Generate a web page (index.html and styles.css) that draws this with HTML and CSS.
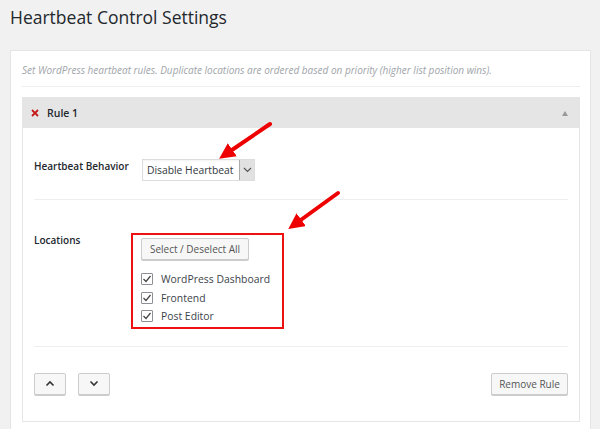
FILE: index.html
```html
<!DOCTYPE html>
<html>
<head>
<meta charset="utf-8">
<link rel="stylesheet" href="styles.css">
</head>
<body>
<div class="wrap">
  <h1 class="title">Heartbeat Control Settings</h1>
  <div class="panel">
    <p class="desc">Set WordPress heartbeat rules. Duplicate locations are ordered based on priority (higher list position wins).</p>
    <div class="rule">
      <div class="rule-head">
        <span class="rule-x"><svg width="8" height="8" viewBox="0 0 8 8"><path d="M1 1 L7 7 M7 1 L1 7" stroke="#c41a1a" stroke-width="1.8"/></svg></span>
        <span class="rule-name">Rule 1</span>
        <span class="rule-toggle"></span>
      </div>
      <div class="rule-body">
        <div class="row row-behavior">
          <div class="label">Heartbeat Behavior</div>
          <div class="field">
            <div class="select">
              <span class="select-text">Disable Heartbeat</span>
              <span class="select-btn">
                <svg width="9" height="6" viewBox="0 0 9 6"><path d="M1 1 L4.5 4.5 L8 1" fill="none" stroke="#555" stroke-width="1.2"/></svg>
              </span>
            </div>
          </div>
        </div>
        <div class="row row-locations">
          <div class="label">Locations</div>
          <div class="field">
            <div class="highlight">
              <button class="btn btn-select">Select / Deselect All</button>
              <ul class="checks">
                <li><span class="cb"><svg width="10" height="10" viewBox="0 0 10 10"><path d="M1.5 5 L4 7.5 L8.5 2" fill="none" stroke="#444" stroke-width="1.2"/></svg></span>WordPress Dashboard</li>
                <li><span class="cb"><svg width="10" height="10" viewBox="0 0 10 10"><path d="M1.5 5 L4 7.5 L8.5 2" fill="none" stroke="#444" stroke-width="1.2"/></svg></span>Frontend</li>
                <li><span class="cb"><svg width="10" height="10" viewBox="0 0 10 10"><path d="M1.5 5 L4 7.5 L8.5 2" fill="none" stroke="#444" stroke-width="1.2"/></svg></span>Post Editor</li>
              </ul>
            </div>
          </div>
        </div>
        <div class="actions">
          <button class="btn btn-icon"><svg width="10" height="7" viewBox="0 0 10 7"><path d="M1.5 5.5 L5 2 L8.5 5.5" fill="none" stroke="#333" stroke-width="1.6"/></svg></button>
          <button class="btn btn-icon"><svg width="10" height="7" viewBox="0 0 10 7"><path d="M1.5 1.5 L5 5 L8.5 1.5" fill="none" stroke="#333" stroke-width="1.6"/></svg></button>
          <button class="btn btn-remove">Remove Rule</button>
        </div>
      </div>
    </div>
  </div>
</div>
<svg class="arrows" width="600" height="429" viewBox="0 0 600 429">
  <defs>
    <marker id="ah" markerWidth="4" markerHeight="4" refX="1" refY="2" orient="auto" markerUnits="strokeWidth">
      <path d="M0 0 L4 2 L0 4 Z" fill="#ee0000"/>
    </marker>
  </defs>
  <line x1="270" y1="124" x2="229" y2="152" stroke="#ee0000" stroke-width="4" stroke-linecap="round" marker-end="url(#ah)"/>
  <line x1="338" y1="193" x2="298" y2="222" stroke="#ee0000" stroke-width="4" stroke-linecap="round" marker-end="url(#ah)"/>
</svg>
</body>
</html>
```

FILE: styles.css
```css
* { box-sizing: border-box; }
html, body { margin: 0; padding: 0; }
body {
  background: #f1f1f1;
  font-family: "Open Sans", "Noto Sans", sans-serif;
  font-size: 10px;
  color: #23282d;
  width: 600px;
  height: 429px;
  overflow: hidden;
  position: relative;
}
.wrap { padding: 0 9px 0 10px; }
.title {
  margin: 0;
  padding-top: 4px;
  font-size: 17.5px;
  font-weight: 400;
  line-height: 27px;
  color: #23282d;
}
.panel {
  margin-top: 19px;
  background: #fff;
  border: 1px solid #e5e5e5;
  border-bottom: none;
  padding: 0 10px 12px 11px;
  height: 380px;
}
.desc {
  margin: 0;
  padding: 12px 0 8px;
  font-style: italic;
  color: #a0a5aa;
  font-size: 10px;
  line-height: 15px;
  border-bottom: 1px solid #eee;
}
.rule {
  margin-top: 10px;
  border: 1px solid #e5e5e5;
}
.rule-head {
  height: 30px;
  background: #e5e5e5;
  display: flex;
  align-items: center;
  padding: 0 8px;
}
.rule-x { width: 16px; display: flex; align-items: center; }
.rule-name { font-size: 10.5px; font-weight: 600; color: #23282d; flex: 1; }
.rule-toggle {
  width: 0; height: 0;
  border-left: 3.5px solid transparent;
  border-right: 3.5px solid transparent;
  border-bottom: 5px solid #999;
  margin-right: 3px;
}
.rule-body { padding: 0 11px; background: #fff; }
.row { display: flex; border-bottom: 1px solid #eee; }
.label {
  width: 108px;
  font-weight: 600;
  font-size: 10px;
  color: #23282d;
}
.row-behavior { padding: 31px 0 18px; }
.row-behavior .label { padding-top: 0; }
.select {
  display: flex;
  width: 113px;
  height: 22px;
  border: 1px solid #ddd;
  background: #fff;
  box-shadow: inset 0 1px 2px rgba(0,0,0,.05);
}
.select-text { flex: 1; padding: 3px 0 0 4px; font-size: 10.3px; color: #32373c; }
.select-btn {
  width: 15px;
  background: #e1e1e1;
  border-left: 1px solid #aaa;
  display: flex;
  align-items: center;
  justify-content: center;
}
.row-locations { padding: 33px 0 17px; }
.highlight {
  margin-left: -11px;
  border: 2px solid #ee1111;
  padding: 3px 10px 1px 8px;
  width: 153px;
}
.btn {
  font-family: inherit;
  background: #f7f7f7;
  border: 1px solid #ccc;
  border-radius: 2px;
  box-shadow: 0 1px 0 #ccc;
  color: #555;
  font-size: 10px;
  height: 22px;
  padding: 0 7px;
  margin: 0;
  cursor: pointer;
}
.btn-select { width: 108px; padding: 0; }
.checks { list-style: none; margin: 10px 0 0; padding: 0; }
.checks li {
  display: flex;
  align-items: center;
  height: 18.5px;
  font-size: 10.4px;
  color: #3c434a;
}
.cb {
  width: 12px; height: 12px;
  border: 1px solid #8c8f94;
  border-radius: 1px;
  margin-right: 8px;
  display: flex;
  align-items: center;
  justify-content: center;
  background: #fff;
}
.actions {
  display: flex;
  align-items: center;
  gap: 12px;
  padding: 26px 0 26px;
}
.btn-icon { width: 32px; padding: 0; display: flex; align-items: center; justify-content: center; }
.btn-remove { margin-left: auto; width: 77px; padding: 0; }
.arrows { position: absolute; left: 0; top: 0; pointer-events: none; }
```
